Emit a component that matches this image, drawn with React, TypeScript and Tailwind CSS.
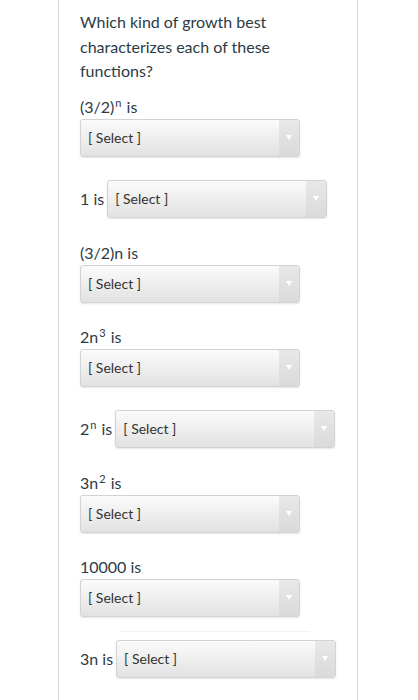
import React from "react";

function Sel({ w = 220 }: { w?: number }) {
  return (
    <div
      className="relative h-[38px] w-[220px] shrink-0 rounded-[3px] border border-[#d3d3d3] bg-gradient-to-b from-[#fbfbfb] to-[#e2e2e2] shadow-[0_1px_2px_rgba(0,0,0,0.1)] flex items-center"
      style={{ width: w }}
    >
      <span className="pl-[7px] text-[14px] text-[#333] leading-none">[ Select ]</span>
      <div className="absolute right-0 top-0 bottom-0 w-[20px] rounded-r-[3px] bg-gradient-to-b from-[#e8e8e8] to-[#dadada] flex items-center justify-center">
        <div className="w-0 h-0 border-l-[3.5px] border-r-[3.5px] border-t-[5px] border-l-transparent border-r-transparent border-t-white" />
      </div>
    </div>
  );
}

function Label({ children }: { children: React.ReactNode }) {
  return <div className="h-[24px] leading-[24px] text-[16px]">{children}</div>;
}

function Sup({ children }: { children: React.ReactNode }) {
  return (
    <span className="inline-block text-[11px] leading-none relative -top-[6px] ml-[1px] mr-[1px]">
      {children}
    </span>
  );
}

function Block({ label, mt }: { label: React.ReactNode; mt: string }) {
  return (
    <div className={mt}>
      <Label>{label}</Label>
      <Sel />
    </div>
  );
}

function Row({ label, mt }: { label: React.ReactNode; mt: string }) {
  return (
    <div className={`${mt} flex items-center gap-[3px]`}>
      <span className="text-[16px] leading-[24px] whitespace-nowrap">{label}</span>
      <Sel />
    </div>
  );
}

export default function App() {
  return (
    <div
      className="min-h-[700px] w-[418px] bg-white text-[#2d3b45] overflow-hidden"
      style={{ fontFamily: "Lato, 'Open Sans', sans-serif" }}
    >
      <div className="ml-[58px] w-[300px] min-h-[700px] border-x border-[#d6d6d6] pl-[21px] pt-[10px]">
        <p className="text-[16px] leading-[24.5px] w-[230px]">
          Which kind of growth best characterizes each of these functions?
        </p>
        <div className="mt-[11px]">
          <Label>
            (3/2)<Sup>n</Sup> is
          </Label>
          <Sel />
        </div>
        <Row label="1 is" mt="mt-[23px]" />
        <Block label="(3/2)n is" mt="mt-[23px]" />
        <Block
          label={
            <>
              2n<Sup>3</Sup> is
            </>
          }
          mt="mt-[22px]"
        />
        <Row
          label={
            <>
              2<Sup>n</Sup> is
            </>
          }
          mt="mt-[23px]"
        />
        <Block
          label={
            <>
              3n<Sup>2</Sup> is
            </>
          }
          mt="mt-[23px]"
        />
        <Block label="10000 is" mt="mt-[22px]" />
        <div className="mt-[14px] ml-[40px] w-[190px] border-t border-[#f2f2f2]" />
        <Row label="3n is" mt="mt-[8px]" />
      </div>
    </div>
  );
}
